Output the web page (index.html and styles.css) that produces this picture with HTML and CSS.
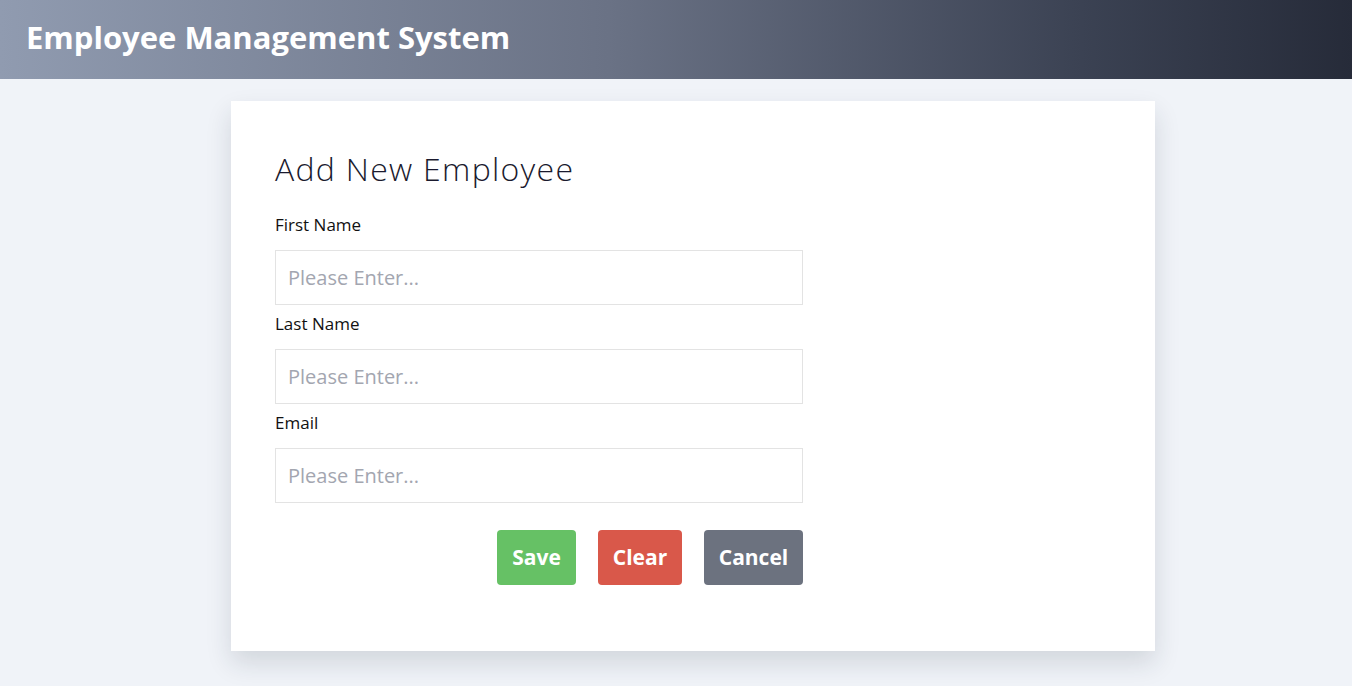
FILE: index.html
```html
<!DOCTYPE html>
<html lang="en">
<head>
<meta charset="utf-8">
<title>Employee Management System</title>
<link rel="stylesheet" href="styles.css">
</head>
<body>
<header class="topbar">
  <h1 class="brand">Employee Management System</h1>
</header>
<main class="page">
  <section class="card">
    <h2 class="card-title">Add New Employee</h2>
    <form class="form">
      <div class="field">
        <label class="label" for="fn">First Name</label>
        <input class="input" id="fn" type="text" placeholder="Please Enter...">
      </div>
      <div class="field">
        <label class="label" for="ln">Last Name</label>
        <input class="input" id="ln" type="text" placeholder="Please Enter...">
      </div>
      <div class="field">
        <label class="label" for="em">Email</label>
        <input class="input" id="em" type="text" placeholder="Please Enter...">
      </div>
      <div class="actions">
        <button type="button" class="btn btn-save">Save</button>
        <button type="button" class="btn btn-clear">Clear</button>
        <button type="button" class="btn btn-cancel">Cancel</button>
      </div>
    </form>
  </section>
</main>
</body>
</html>
```
FILE: styles.css
```css
* { box-sizing: border-box; }
html, body { margin: 0; padding: 0; }
body {
  background: #f0f3f8;
  font-family: "Open Sans", "Noto Sans", sans-serif;
  color: #111;
  height: 686px;
  overflow: hidden;
}
.topbar {
  height: 79px;
  background: linear-gradient(90deg, #909bb0 0%, #6a7285 45%, #3b4253 80%, #262b39 100%);
  display: flex;
  align-items: center;
  padding-left: 26px;
}
.brand {
  margin: 0;
  color: #fff;
  font-size: 31px;
  font-weight: 700;
  letter-spacing: 0;
  line-height: 1;
  padding-bottom: 4px;
}
.page {
  padding-top: 22px;
  padding-left: 231px;
}
.card {
  width: 924px;
  height: 550px;
  background: #fff;
  box-shadow: 0 12px 24px rgba(30, 40, 60, 0.14);
  padding: 46px 44px 0 44px;
}
.card-title {
  margin: 0 0 22px 0;
  font-size: 32px;
  font-weight: 300;
  line-height: 44px;
  color: #1a1a2e;
  letter-spacing: 1.3px;
}
.form {
  width: 528px;
  display: flex;
  flex-direction: column;
}
.field {
  display: flex;
  flex-direction: column;
}
.label {
  font-size: 17px;
  line-height: 24px;
  margin-bottom: 13px;
  color: #111;
}
.field + .field .label { margin-top: 7px; }
.input {
  height: 55px;
  border: 1px solid #e3e3e3;
  border-radius: 0;
  padding: 0 12px;
  font-family: inherit;
  font-size: 20px;
  color: #333;
  outline: none;
}
.input::placeholder { color: #a3a6b0; }
.actions {
  display: flex;
  justify-content: flex-end;
  gap: 22px;
  margin-top: 27px;
}
.btn {
  height: 55px;
  border: none;
  border-radius: 4px;
  color: #fff;
  font-family: inherit;
  font-size: 21px;
  font-weight: 700;
  padding: 0 12px 2px;
  cursor: pointer;
}
.btn-save { background: #66c165; width: 79px; }
.btn-clear { background: #d9584a; width: 84px; }
.btn-cancel { background: #6c727f; width: 99px; }
```
